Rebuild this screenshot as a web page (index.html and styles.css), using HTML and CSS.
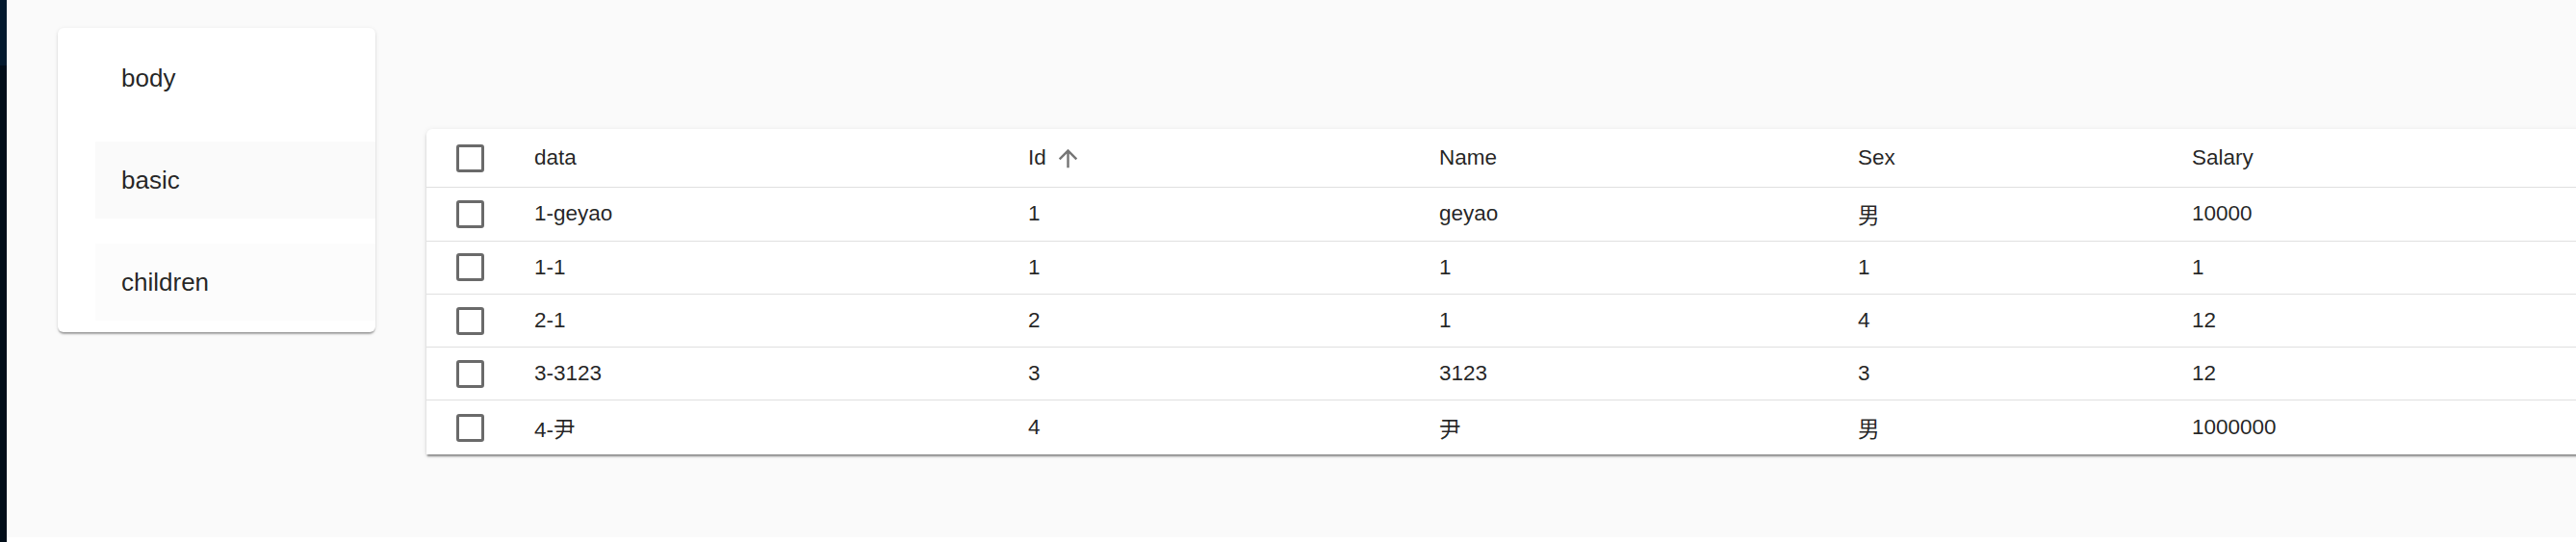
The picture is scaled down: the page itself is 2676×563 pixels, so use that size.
FILE: index.html
```html
<!DOCTYPE html>
<html lang="en">
<head>
    <meta charset="UTF-8">
    <meta name="viewport" content="width=device-width, initial-scale=1.0">
    <title>table</title>
    <link rel="stylesheet" href="styles.css">
</head>
<body>
    <div class="rail"><div class="rail-top"></div></div>

    <div class="app">
        <div class="menu">
            <div class="menu-item">body</div>
            <div class="menu-item active">basic</div>
            <div class="menu-item soft">children</div>
        </div>

        <div class="table">
            <div class="row head">
                <div class="cell"><span class="check"></span></div>
                <div class="cell">data</div>
                <div class="cell">Id
                    <svg class="sort" viewBox="0 0 24 24"><path d="M4 12l1.41 1.41L11 7.83V20h2V7.83l5.58 5.59L20 12l-8-8-8 8z"/></svg>
                </div>
                <div class="cell">Name</div>
                <div class="cell">Sex</div>
                <div class="cell">Salary</div>
            </div>
            <div class="row">
                <div class="cell"><span class="check"></span></div>
                <div class="cell">1-geyao</div>
                <div class="cell">1</div>
                <div class="cell">geyao</div>
                <div class="cell">男</div>
                <div class="cell">10000</div>
            </div>
            <div class="row">
                <div class="cell"><span class="check"></span></div>
                <div class="cell">1-1</div>
                <div class="cell">1</div>
                <div class="cell">1</div>
                <div class="cell">1</div>
                <div class="cell">1</div>
            </div>
            <div class="row">
                <div class="cell"><span class="check"></span></div>
                <div class="cell">2-1</div>
                <div class="cell">2</div>
                <div class="cell">1</div>
                <div class="cell">4</div>
                <div class="cell">12</div>
            </div>
            <div class="row">
                <div class="cell"><span class="check"></span></div>
                <div class="cell">3-3123</div>
                <div class="cell">3</div>
                <div class="cell">3123</div>
                <div class="cell">3</div>
                <div class="cell">12</div>
            </div>
            <div class="row last">
                <div class="cell"><span class="check"></span></div>
                <div class="cell">4-尹</div>
                <div class="cell">4</div>
                <div class="cell">尹</div>
                <div class="cell">男</div>
                <div class="cell">1000000</div>
            </div>
        </div>
    </div>
</body>
</html>
```

FILE: styles.css
```css
html {
    background: #ffffff;
}
body {
    margin: 0;
    display: flex;
    align-items: flex-start;
    font-family: "Liberation Sans", Arial, "Noto Sans CJK SC", sans-serif;
    color: rgba(0, 0, 0, 0.87);
    overflow: hidden;
}
.rail {
    width: 7px;
    height: 563px;
    flex-shrink: 0;
    background: #010d19;
}
.rail-top {
    height: 68px;
    background: #03192e;
}
.app {
    flex: 1;
    height: 558px;
    background: #fafafa;
    display: flex;
    align-items: flex-start;
    overflow: hidden;
    padding-left: 53px;
}

/* left menu card */
.menu {
    width: 330px;
    flex-shrink: 0;
    margin-top: 29px;
    padding: 12px 0;
    box-sizing: border-box;
    background: #fff;
    border-radius: 6px;
    display: flex;
    flex-direction: column;
    gap: 26px;
    box-shadow: 0 3px 2px -1px rgba(0, 0, 0, 0.28), 0 1px 2px rgba(0, 0, 0, 0.12), 0 1px 5px rgba(0, 0, 0, 0.08);
}
.menu-item {
    height: 80px;
    margin-left: 39px;
    padding-left: 27px;
    display: flex;
    align-items: center;
    font-size: 26px;
}
.menu-item.active {
    background: #fafafa;
}
.menu-item.soft {
    background: #fcfcfc;
}

/* data table */
.table {
    width: 2400px;
    flex-shrink: 0;
    margin-top: 134px;
    margin-left: 53px;
    background: #fff;
    border-radius: 6px 6px 0 0;
    box-shadow: 0 3px 2px -1px rgba(0, 0, 0, 0.35), 0 2px 3px rgba(0, 0, 0, 0.12), 0 1px 6px rgba(0, 0, 0, 0.08);
    font-size: 22.5px;
}
.row {
    display: grid;
    grid-template-columns: 112px 513px 427px 435px 347px 1fr;
    height: 55.3px;
    box-sizing: border-box;
    border-bottom: 1px solid #e0e0e0;
}
.row.head {
    height: 61.3px;
}
.row.last {
    height: 56px;
    border-bottom: none;
}
.cell {
    display: flex;
    align-items: center;
}
.cell:first-child {
    padding-left: 31px;
}
.check {
    width: 29px;
    height: 29px;
    box-sizing: border-box;
    border: 3px solid #6a6a6a;
    border-radius: 3px;
}
.sort {
    width: 29px;
    height: 29px;
    margin-left: 8px;
    fill: #757575;
}
```
